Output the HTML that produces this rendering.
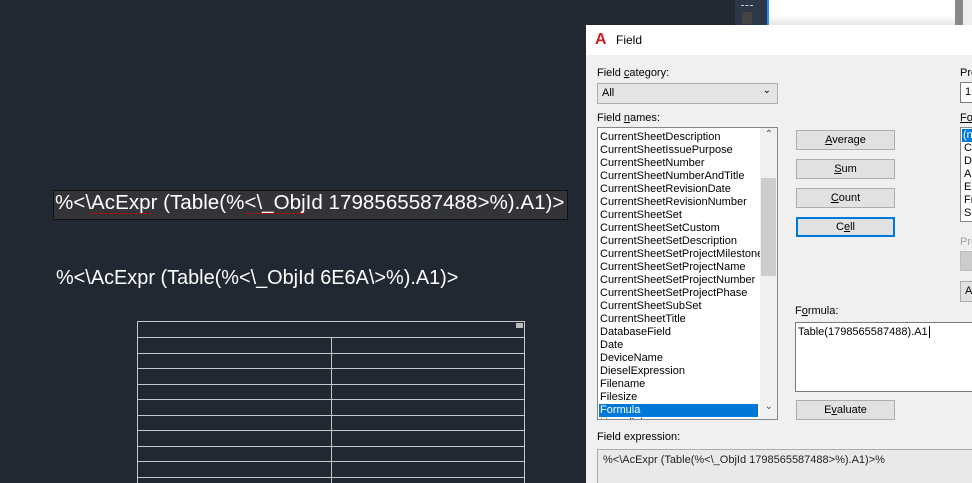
<!DOCTYPE html>
<html style="width:972px;height:483px;overflow:hidden"><head><style>
*{margin:0;padding:0;box-sizing:border-box}
body{width:972px;height:483px;overflow:hidden;background:#222831;position:relative;font-family:"Liberation Sans",Arial,sans-serif}
.a{position:absolute}
.dlg{font-size:11px;color:#000}
.btn{position:absolute;left:796px;width:99px;height:20px;background:#e1e1e1;border:1px solid #adadad;text-align:center;line-height:18px;font-size:11px}
.li{height:13px;line-height:13px;padding-left:2px;font-size:11px;white-space:nowrap}
.hl{position:absolute;left:0;right:0;height:1px;background:#c8c8c8}
</style></head><body>
<div class="a" style="left:735px;top:0;width:33px;height:25px;background:#2d3748"></div>
<div class="a" style="left:741px;top:0;width:12px;height:6px;border-bottom:1px dashed #ccc"></div>
<div class="a" style="left:742px;top:12px;width:10px;height:12px;background:#444"></div>
<div class="a" style="left:767px;top:0;width:2px;height:25px;background:#1e90ff"></div>
<div class="a" style="left:769px;top:0;width:186px;height:25px;background:linear-gradient(#fff 60%,#e6e6e6)"></div>
<div class="a" style="left:955px;top:0;width:8px;height:25px;background:#888"></div>
<div class="a" style="left:963px;top:0;width:9px;height:25px;background:#eee"></div>

<div class="a" style="left:53px;top:190px;width:515px;height:30px;background:#333437;border:1px solid #111"></div>
<div class="a" style="left:55px;top:190px;font-size:20.6px;line-height:26px;color:#fff;white-space:nowrap">%&lt;\AcExpr (Table(%&lt;\_ObjId 1798565587488&gt;%).A1)&gt;</div>
<div class="a" style="left:90px;top:213px;width:62px;border-top:1px dashed #d00"></div>
<div class="a" style="left:246px;top:213px;width:58px;border-top:1px dashed #d00"></div>
<div class="a" style="left:56px;top:265px;font-size:19.9px;line-height:26px;color:#fff;white-space:nowrap">%&lt;\AcExpr (Table(%&lt;\_ObjId 6E6A\&gt;%).A1)&gt;</div>

<div class="a" style="left:137px;top:321px;width:388px;height:170px;border:1px solid #c8c8c8">
<div class="hl" style="top:15px"></div>
<div class="a" style="left:193px;top:16px;width:1px;height:160px;background:#c8c8c8"></div>
<div class="hl" style="top:31px"></div><div class="hl" style="top:46px"></div><div class="hl" style="top:62px"></div><div class="hl" style="top:77px"></div><div class="hl" style="top:93px"></div><div class="hl" style="top:108px"></div><div class="hl" style="top:124px"></div><div class="hl" style="top:139px"></div><div class="hl" style="top:155px"></div>
<div class="a" style="right:1px;top:1px;width:7px;height:5px;background:#bbb"></div>
</div>

<div class="a dlg" style="left:586px;top:25px;width:386px;height:458px;background:#f0f0f0;overflow:hidden">
<div class="a" style="left:0;top:0;width:386px;height:30px;background:#fff"></div>
<div class="a" style="left:9px;top:8px;font-size:16px;font-weight:bold;color:#c8202a;line-height:14px">A</div>
<div class="a" style="left:30px;top:8px;font-size:12px">Field</div>

<div class="a" style="left:11px;top:42px">Field <u>c</u>ategory:</div>
<div class="a" style="left:11px;top:58px;width:181px;height:21px;background:#e5e5e5;border:1px solid #adadad;padding:3px 4px">All<span style="position:absolute;right:6px;top:1px;font-size:10px">&#8964;</span></div>
<div class="a" style="left:11px;top:87px">Field <u>n</u>ames:</div>
<div class="a" style="left:11px;top:102px;width:181px;height:293px;background:#fff;border:1px solid #828790;overflow:hidden;padding-top:3px">
<div class="li">CurrentSheetDescription</div><div class="li">CurrentSheetIssuePurpose</div><div class="li">CurrentSheetNumber</div><div class="li">CurrentSheetNumberAndTitle</div><div class="li">CurrentSheetRevisionDate</div><div class="li">CurrentSheetRevisionNumber</div><div class="li">CurrentSheetSet</div><div class="li">CurrentSheetSetCustom</div><div class="li">CurrentSheetSetDescription</div><div class="li">CurrentSheetSetProjectMilestone</div><div class="li">CurrentSheetSetProjectName</div><div class="li">CurrentSheetSetProjectNumber</div><div class="li">CurrentSheetSetProjectPhase</div><div class="li">CurrentSheetSubSet</div><div class="li">CurrentSheetTitle</div><div class="li">DatabaseField</div><div class="li">Date</div><div class="li">DeviceName</div><div class="li">DieselExpression</div><div class="li">Filename</div><div class="li">Filesize</div><div class="li" style="background:#0078d7;color:#fff;width:159px;margin-left:1px;padding-left:1px">Formula</div><div class="li">Hyperlink</div>
<div class="a" style="right:0;top:0;width:17px;height:291px;background:#f0f0f0"></div>
<div class="a" style="right:1px;top:50px;width:15px;height:98px;background:#cdcdcd"></div>
<div class="a" style="right:4px;top:1px;font-size:10px;color:#555">&#8963;</div>
<div class="a" style="right:4px;top:273px;font-size:10px;color:#555">&#8964;</div>
</div>

<div class="a" style="left:11px;top:406px">Field expression:</div>
<div class="a" style="left:11px;top:424px;width:380px;height:40px;background:#e9e9e9;border:1px solid #adadad;padding:4px 5px;color:#222">%&lt;\AcExpr (Table(%&lt;\_ObjId 1798565587488&gt;%).A1)&gt;%</div>

<div class="a" style="left:209px;top:280px">F<u>o</u>rmula:</div>
<div class="a" style="left:209px;top:297px;width:180px;height:70px;background:#fff;border:1px solid #7a7a7a;padding:3px 2px">Table(1798565587488).A1<span style="border-left:1px solid #000;margin-left:1px"></span></div>

<div class="a" style="left:374px;top:42px">Pre</div>
<div class="a" style="left:374px;top:57px;width:20px;height:21px;background:#fff;border:1px solid #7a7a7a;padding:3px 4px">1</div>
<div class="a" style="left:374px;top:87px"><u>Fo</u></div>
<div class="a" style="left:374px;top:102px;width:20px;height:95px;background:#fff;border:1px solid #828790;padding:1px">
<div class="li" style="background:#0078d7;color:#fff;padding-left:1px">(n</div><div class="li">Cr</div><div class="li">De</div><div class="li">Ar</div><div class="li">En</div><div class="li">Fr</div><div class="li">So</div></div>
<div class="a" style="left:374px;top:211px;color:#a0a0a0">Pre</div>
<div class="a" style="left:374px;top:226px;width:20px;height:20px;background:#ccc;border:1px solid #bfbfbf"></div>
<div class="a" style="left:374px;top:256px;width:20px;height:21px;background:#e1e1e1;border:1px solid #adadad;padding:3px 4px">A</div>
</div>
<div class="btn" style="top:130px"><u>A</u>verage</div>
<div class="btn" style="top:159px"><u>S</u>um</div>
<div class="btn" style="top:188px"><u>C</u>ount</div>
<div class="btn" style="top:217px;border:2px solid #0078d7;line-height:16px">C<u>e</u>ll</div>
<div class="btn" style="top:400px">E<u>v</u>aluate</div>
</body></html>
